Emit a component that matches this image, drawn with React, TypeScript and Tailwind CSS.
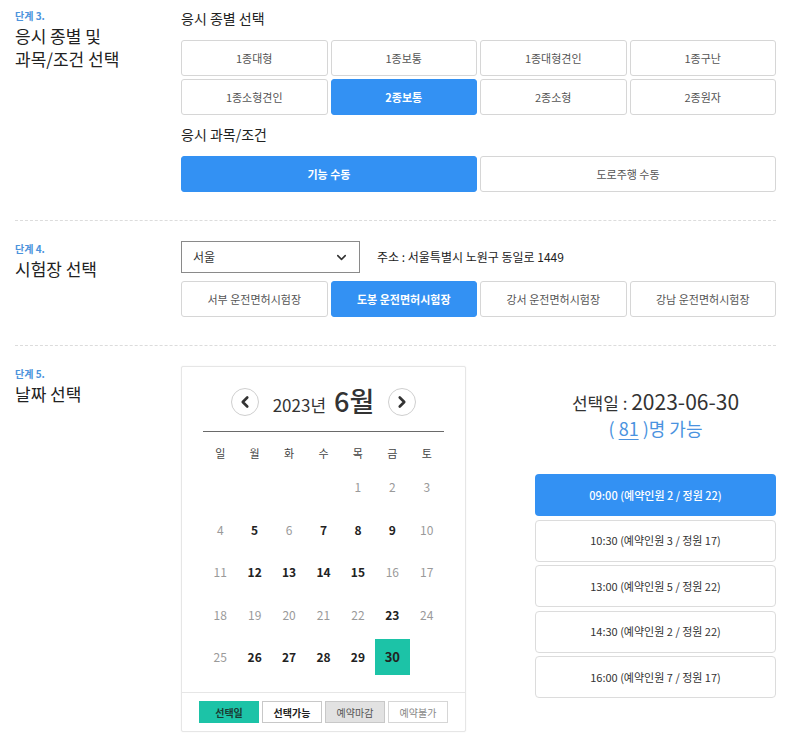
import React from "react";
import { ChevronDown, ChevronLeft, ChevronRight } from "lucide-react";

const BLUE = "bg-[#3391f3]";

function OptBtn({ label, active }: { label: string; active?: boolean }) {
  return active ? (
    <div className={`h-[36px] rounded-[3px] ${BLUE} border border-[#3391f3] flex items-center justify-center text-[11px] font-bold text-white`}>
      {label}
    </div>
  ) : (
    <div className="h-[36px] rounded-[3px] bg-white border border-[#d6d6d6] flex items-center justify-center text-[11px] text-[#555]">
      {label}
    </div>
  );
}

function StepTitle({ step, lines }: { step: string; lines: string[] }) {
  return (
    <div className="w-[166px] shrink-0 pt-[1px]">
      <div className="text-[10px] leading-[14px] font-bold text-[#4b93dc]">{step}</div>
      <div className="mt-[1px] text-[17px] leading-[23px] text-[#222]">
        {lines.map((l) => (
          <div key={l}>{l}</div>
        ))}
      </div>
    </div>
  );
}

const available = new Set([5, 7, 8, 9, 12, 13, 14, 15, 23, 26, 27, 28, 29]);

function Calendar() {
  const cells: (number | null)[] = [null, null, null, null];
  for (let d = 1; d <= 30; d++) cells.push(d);
  while (cells.length < 35) cells.push(null);
  return (
    <div className="w-[285px] shrink-0 border border-[#e6e6e6] rounded-[2px] bg-white shadow-[0_0_2px_rgba(0,0,0,0.06)]">
      <div className="pt-[20px] h-[50px] flex items-center justify-center">
        <div className="w-[28px] h-[28px] rounded-full border border-[#cfcfcf] flex items-center justify-center text-[#333]">
          <ChevronLeft size={18} strokeWidth={3.5} />
        </div>
        <div className="mx-[14px] flex items-baseline text-[#333]">
          <span className="text-[17px]">2023년</span>
          <span className="ml-[8px] text-[27px] font-medium leading-[30px]">6월</span>
        </div>
        <div className="w-[28px] h-[28px] rounded-full border border-[#cfcfcf] flex items-center justify-center text-[#333]">
          <ChevronRight size={18} strokeWidth={3.5} />
        </div>
      </div>
      <div className="mx-[21px] mt-[14px] border-t border-[#6a6a6a]" />
      <div className="mx-[21px] mt-[10px] grid grid-cols-7 h-[22px] items-center text-[11px] text-[#444]">
        {["일", "월", "화", "수", "목", "금", "토"].map((d) => (
          <div key={d} className="text-center">{d}</div>
        ))}
      </div>
      <div className="mx-[21px] mt-[5px] grid grid-cols-7 gap-y-[6.5px]">
        {cells.map((d, i) => {
          if (d === null) return <div key={i} className="h-[36px]" />;
          if (d === 30)
            return (
              <div key={i} className="h-[36px] flex items-center justify-center bg-[#1cc3a7] text-[13px] font-bold text-[#222]">
                {d}
              </div>
            );
          const av = available.has(d);
          return (
            <div
              key={i}
              className={`h-[36px] flex items-center justify-center text-[12px] ${av ? "font-bold text-[#222]" : "text-[#9a9a9a]"}`}
            >
              {d}
            </div>
          );
        })}
      </div>
      <div className="mt-[17px] border-t border-[#e6e6e6] flex justify-center gap-[3px] py-[8px]">
        <div className="w-[60px] h-[22px] bg-[#1cc3a7] flex items-center justify-center text-[10px] font-bold text-[#1a3a33]">선택일</div>
        <div className="w-[60px] h-[22px] border border-[#c8c8c8] bg-white flex items-center justify-center text-[10px] font-bold text-[#222]">선택가능</div>
        <div className="w-[60px] h-[22px] border border-[#c8c8c8] bg-[#e2e2e2] flex items-center justify-center text-[10px] text-[#555]">예약마감</div>
        <div className="w-[60px] h-[22px] border border-[#d6d6d6] bg-white flex items-center justify-center text-[10px] text-[#888]">예약불가</div>
      </div>
    </div>
  );
}

const slots = [
  "09:00 (예약인원 2 / 정원 22)",
  "10:30 (예약인원 3 / 정원 17)",
  "13:00 (예약인원 5 / 정원 22)",
  "14:30 (예약인원 2 / 정원 22)",
  "16:00 (예약인원 7 / 정원 17)",
];

export default function App() {
  return (
    <div className="w-[800px] h-[743px] bg-white pl-[15px] pr-[24px] font-['Noto_Sans_CJK_KR',sans-serif] text-[#222]">
      {/* Step 3 */}
      <div className="flex pt-[8px] pb-[28px] border-b border-dashed border-[#dcdcdc]">
        <StepTitle step="단계 3." lines={["응시 종별 및", "과목/조건 선택"]} />
        <div className="flex-1">
          <div className="text-[14px] leading-[20px] text-[#222]">응시 종별 선택</div>
          <div className="mt-[12px] grid grid-cols-4 gap-[3px]">
            <OptBtn label="1종대형" />
            <OptBtn label="1종보통" />
            <OptBtn label="1종대형견인" />
            <OptBtn label="1종구난" />
            <OptBtn label="1종소형견인" />
            <OptBtn label="2종보통" active />
            <OptBtn label="2종소형" />
            <OptBtn label="2종원자" />
          </div>
          <div className="mt-[9px] text-[14px] leading-[20px] text-[#222]">응시 과목/조건</div>
          <div className="mt-[12px] grid grid-cols-2 gap-[3px]">
            <OptBtn label="기능 수동" active />
            <OptBtn label="도로주행 수동" />
          </div>
        </div>
      </div>

      {/* Step 4 */}
      <div className="flex pt-[20px] pb-[28px] border-b border-dashed border-[#dcdcdc]">
        <StepTitle step="단계 4." lines={["시험장 선택"]} />
        <div className="flex-1">
          <div className="flex items-center">
            <div className="w-[179px] h-[32px] border border-[#8a8a8a] flex items-center justify-between pl-[11px] pr-[10px] text-[12px] text-[#333]">
              <span>서울</span>
              <ChevronDown size={15} strokeWidth={2.5} className="text-[#333]" />
            </div>
            <div className="ml-[17px] text-[12px] text-[#222]">주소 : 서울특별시 노원구 동일로 1449</div>
          </div>
          <div className="mt-[8px] grid grid-cols-4 gap-[3px]">
            <OptBtn label="서부 운전면허시험장" />
            <OptBtn label="도봉 운전면허시험장" active />
            <OptBtn label="강서 운전면허시험장" />
            <OptBtn label="강남 운전면허시험장" />
          </div>
        </div>
      </div>

      {/* Step 5 */}
      <div className="flex pt-[20px]">
        <StepTitle step="단계 5." lines={["날짜 선택"]} />
        <div className="flex-1 flex">
          <Calendar />
          <div className="flex-1 flex justify-end">
            <div className="w-[241px] pt-[22px]">
              <div className="text-center leading-[26px] text-[#333]">
                <span className="text-[17px]">선택일 : </span>
                <span className="text-[21px]">2023-06-30</span>
              </div>
              <div className="mt-[-1px] text-center leading-[26px] text-[18px] text-[#4a93e0]">
                ( <span className="underline underline-offset-[3px]">81</span> )명 가능
              </div>
              <div className="mt-[33px] flex flex-col gap-[3.5px]">
                {slots.map((s, i) =>
                  i === 0 ? (
                    <div key={s} className={`h-[42px] rounded-[4px] ${BLUE} flex items-center justify-center text-[11px] font-medium text-white`}>
                      {s}
                    </div>
                  ) : (
                    <div key={s} className="h-[42px] rounded-[4px] border border-[#dcdcdc] bg-white flex items-center justify-center text-[11px] text-[#333]">
                      {s}
                    </div>
                  )
                )}
              </div>
            </div>
          </div>
        </div>
      </div>
    </div>
  );
}
